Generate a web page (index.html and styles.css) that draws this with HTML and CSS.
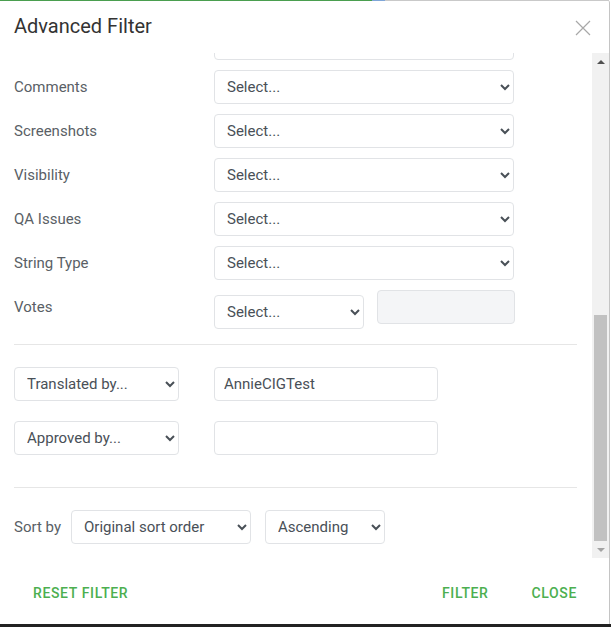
FILE: index.html
```html
<!DOCTYPE html>
<html>
<head>
  <meta charset="utf-8">
  <title>Advanced Filter</title>
  <link rel="stylesheet" href="styles.css">
</head>
<body>
  <div class="dialog">
    <div class="progress">
      <span class="progress-done"></span>
      <span class="progress-active"></span>
    </div>

    <div class="dialog-header">
      <h2 class="dialog-title">Advanced Filter</h2>
      <button class="close-btn" aria-label="Close">
        <svg viewBox="0 0 16 16" width="16" height="16" fill="none" stroke="currentColor" stroke-width="1.2">
          <path d="M1 1 15 15M15 1 1 15"/>
        </svg>
      </button>
    </div>

    <div class="dialog-body">
      <div class="scroll-area">
        <div class="scroll-content">
          <div class="field-row first">
            <span class="field-label"></span>
            <div class="control wide"></div>
          </div>
          <div class="field-row">
            <label class="field-label">Comments</label>
            <select class="control wide"><option>Select...</option></select>
          </div>
          <div class="field-row">
            <label class="field-label">Screenshots</label>
            <select class="control wide"><option>Select...</option></select>
          </div>
          <div class="field-row">
            <label class="field-label">Visibility</label>
            <select class="control wide"><option>Select...</option></select>
          </div>
          <div class="field-row">
            <label class="field-label">QA Issues</label>
            <select class="control wide"><option>Select...</option></select>
          </div>
          <div class="field-row">
            <label class="field-label">String Type</label>
            <select class="control wide"><option>Select...</option></select>
          </div>
          <div class="field-row votes">
            <label class="field-label">Votes</label>
            <select class="control votes-select"><option>Select...</option></select>
            <input class="control votes-input" type="text" disabled>
          </div>

          <hr class="divider">

          <div class="user-row">
            <select class="control user-select"><option>Translated by...</option></select>
            <input class="control user-input" type="text" value="AnnieCIGTest">
          </div>
          <div class="user-row">
            <select class="control user-select"><option>Approved by...</option></select>
            <input class="control user-input" type="text">
          </div>

          <hr class="divider after-users">

          <div class="sort-row">
            <label class="sort-label">Sort by</label>
            <select class="control sort-select"><option>Original sort order</option></select>
            <select class="control order-select"><option>Ascending</option></select>
          </div>
        </div>
      </div>

      <div class="scrollbar">
        <div class="scroll-btn"><span class="arrow-up"></span></div>
        <div class="scroll-track"><div class="scroll-thumb"></div></div>
        <div class="scroll-btn"><span class="arrow-down"></span></div>
      </div>
    </div>

    <div class="dialog-footer">
      <button class="text-btn">Reset Filter</button>
      <div class="footer-actions">
        <button class="text-btn">Filter</button>
        <button class="text-btn">Close</button>
      </div>
    </div>
  </div>
  <div class="backdrop-edge"></div>
</body>
</html>
```

FILE: styles.css
```css
:root {
  --green: #4caf50;
  --text: #333333;
  --label: #5a5f66;
  --control-text: #495057;
  --border: #e1e3e6;
  --radius: 4px;
}

* {
  margin: 0;
  padding: 0;
  box-sizing: border-box;
}

body {
  width: 611px;
  height: 627px;
  overflow: hidden;
  background: #ffffff;
  font-family: Roboto, "Liberation Sans", sans-serif;
  font-size: 15px;
  color: var(--text);
}

.dialog {
  width: 610px;
  height: 624px;
  display: flex;
  flex-direction: column;
  background: #ffffff;
  border-right: 1px solid #c4c4c4;
  border-top-right-radius: 3px;
}

/* thin progress strip along the top edge */
.progress {
  display: flex;
  height: 1px;
  flex-shrink: 0;
  background: #c9c9c9;
}

.progress-done {
  width: 372px;
  background: #4a9e4f;
}

.progress-active {
  width: 13px;
  background: #7fa6d8;
}

.dialog-header {
  height: 52px;
  flex-shrink: 0;
  display: flex;
  align-items: center;
  justify-content: space-between;
  padding: 0 18px 0 14px;
}

.dialog-title {
  font-size: 20px;
  font-weight: 400;
  color: #333333;
  margin-top: -3px;
}

.close-btn {
  border: none;
  background: none;
  color: #a8a8a8;
  display: flex;
  margin-top: 1px;
  cursor: pointer;
}

.dialog-body {
  height: 505px;
  flex-shrink: 0;
  display: flex;
}

.scroll-area {
  flex: 1;
  overflow: hidden;
}

.scroll-content {
  padding: 0 15px 0 14px;
  display: flex;
  flex-direction: column;
}

.control {
  height: 34px;
  border: 1px solid var(--border);
  border-radius: var(--radius);
  background: #ffffff;
  color: var(--control-text);
  font-family: Roboto, "Liberation Sans", sans-serif;
  font-size: 15px;
}

select.control {
  padding: 0 6px 0 8px;
}

input.control {
  padding: 0 9px;
  outline: none;
}

.field-row {
  display: flex;
  align-items: center;
  margin-top: 10px;
}

.field-row.first {
  margin-top: -27px;
}

.field-label {
  flex: 0 0 200px;
  color: var(--label);
}

.wide {
  width: 300px;
}

.field-row.votes {
  align-items: flex-start;
}

.votes .field-label {
  line-height: 34px;
}

.votes-select {
  width: 150px;
  margin-top: 5px;
}

.votes-input {
  width: 138px;
  margin-left: 13px;
  background: #f4f5f7;
}

.divider {
  border: none;
  border-top: 1px solid #e6e6e6;
  margin: 15px 0 22px;
}

.divider.after-users {
  margin-top: 32px;
}

.user-row {
  display: flex;
  gap: 35px;
}

.user-row + .user-row {
  margin-top: 20px;
}

.user-select {
  width: 165px;
}

.user-input {
  width: 224px;
}

.sort-row {
  display: flex;
  align-items: center;
}

.sort-label {
  color: var(--label);
  margin-right: 10px;
}

.sort-select {
  width: 180px;
  margin-right: 14px;
}

.order-select {
  width: 120px;
}

/* classic scrollbar, drawn by hand */
.scrollbar {
  width: 17px;
  flex-shrink: 0;
  display: flex;
  flex-direction: column;
  background: #f1f1f1;
}

.scroll-btn {
  height: 17px;
  flex-shrink: 0;
  display: flex;
  align-items: center;
  justify-content: center;
}

.arrow-up {
  border-left: 4px solid transparent;
  border-right: 4px solid transparent;
  border-bottom: 4px solid #505050;
}

.arrow-down {
  border-left: 4px solid transparent;
  border-right: 4px solid transparent;
  border-top: 4px solid #a3a3a3;
}

.scroll-track {
  flex: 1;
  display: flex;
  flex-direction: column;
  justify-content: flex-end;
}

.scroll-thumb {
  height: 226px;
  margin: 0 2px;
  background: #c1c1c1;
}

.dialog-footer {
  flex: 1;
  display: flex;
  align-items: center;
  justify-content: space-between;
  padding: 4px 14px 0;
}

.footer-actions {
  display: flex;
  gap: 6px;
}

.text-btn {
  border: none;
  background: none;
  padding: 8px 18px 8px 19px;
  font-family: Roboto, "Liberation Sans", sans-serif;
  font-size: 14px;
  font-weight: 500;
  letter-spacing: 0.045em;
  text-transform: uppercase;
  color: var(--green);
  cursor: pointer;
}

.backdrop-edge {
  height: 3px;
  background: #222222;
}
```
